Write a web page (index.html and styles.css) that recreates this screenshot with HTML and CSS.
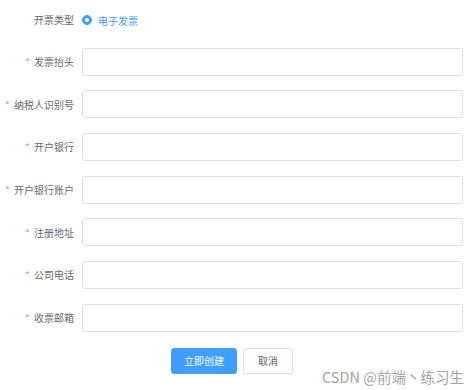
FILE: index.html
```html
<!DOCTYPE html>
<html lang="zh">
<head>
<meta charset="utf-8">
<link rel="stylesheet" href="styles.css">
</head>
<body>
<form class="form">
  <div class="row row-radio">
    <label class="label">开票类型</label>
    <div class="radio">
      <span class="radio-dot"></span>
      <span class="radio-text">电子发票</span>
    </div>
  </div>
  <div class="row">
    <label class="label"><span class="req">*</span>发票抬头</label>
    <input class="input" type="text">
  </div>
  <div class="row">
    <label class="label"><span class="req">*</span>纳税人识别号</label>
    <input class="input" type="text">
  </div>
  <div class="row">
    <label class="label"><span class="req">*</span>开户银行</label>
    <input class="input" type="text">
  </div>
  <div class="row">
    <label class="label"><span class="req">*</span>开户银行账户</label>
    <input class="input" type="text">
  </div>
  <div class="row">
    <label class="label"><span class="req">*</span>注册地址</label>
    <input class="input" type="text">
  </div>
  <div class="row">
    <label class="label"><span class="req">*</span>公司电话</label>
    <input class="input" type="text">
  </div>
  <div class="row">
    <label class="label"><span class="req">*</span>收票邮箱</label>
    <input class="input" type="text">
  </div>
  <div class="actions">
    <button type="button" class="btn btn-primary">立即创建</button>
    <button type="button" class="btn">取消</button>
  </div>
</form>
<div class="watermark">CSDN @前端丶练习生</div>
</body>
</html>
```

FILE: styles.css
```css
html, body {
  margin: 0;
  padding: 0;
  background: #fff;
  font-family: "Noto Sans CJK SC", "Noto Sans", sans-serif;
}
body {
  width: 474px;
  height: 390px;
  position: relative;
  overflow: hidden;
}
.form {
  padding-top: 5px;
  display: flex;
  flex-direction: column;
  row-gap: 14.67px;
}
.row {
  display: flex;
  align-items: center;
  height: 28px;
}
.label {
  width: 74px;
  padding-right: 8px;
  text-align: right;
  font-size: 10px;
  color: #66686c;
  white-space: nowrap;
}
.req {
  color: #f78989;
  margin-right: 4px;
}
.input {
  box-sizing: border-box;
  width: 381px;
  height: 28px;
  border: 1px solid #dcdfe6;
  border-radius: 3px;
  margin: 0;
  padding: 0 10px;
  outline: none;
  background: #fff;
}
.radio {
  display: flex;
  align-items: center;
  margin-top: 2px;
}
.radio-dot {
  box-sizing: border-box;
  width: 10px;
  height: 10px;
  border-radius: 50%;
  background: #409eff;
  border: 1px solid #409eff;
  position: relative;
}
.radio-dot::after {
  content: "";
  position: absolute;
  left: 50%;
  top: 50%;
  width: 4px;
  height: 4px;
  margin: -2px 0 0 -2px;
  border-radius: 50%;
  background: #fff;
}
.radio-text {
  margin-left: 6px;
  font-size: 10px;
  color: #409eff;
}
.actions {
  display: flex;
  padding-left: 171px;
  margin-top: 1.33px;
  column-gap: 6px;
}
.btn {
  box-sizing: border-box;
  height: 26px;
  width: 50px;
  padding: 0;
  border: 1px solid #dcdfe6;
  border-radius: 3px;
  background: #fff;
  color: #606266;
  font-family: "Noto Sans CJK SC", sans-serif;
  font-size: 10px;
}
.btn-primary {
  width: 66px;
  background: #409eff;
  border-color: #409eff;
  color: #fff;
}
.watermark {
  position: absolute;
  left: 322px;
  top: 366px;
  font-size: 14.5px;
  color: #a4a4a4;
  white-space: nowrap;
}
```
